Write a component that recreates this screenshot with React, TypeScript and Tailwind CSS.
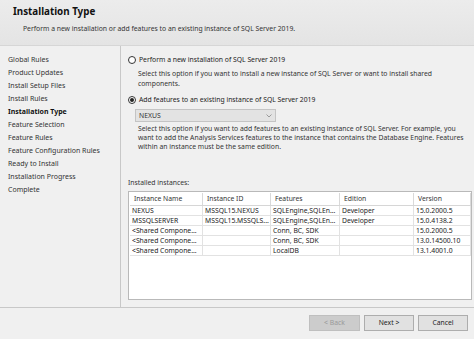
import React from 'react';

const steps = [
  'Global Rules',
  'Product Updates',
  'Install Setup Files',
  'Install Rules',
  'Installation Type',
  'Feature Selection',
  'Feature Rules',
  'Feature Configuration Rules',
  'Ready to Install',
  'Installation Progress',
  'Complete',
];

const rows = [
  ['NEXUS', 'MSSQL15.NEXUS', 'SQLEngine,SQLEn...', 'Developer', '15.0.2000.5'],
  ['MSSQLSERVER', 'MSSQL15.MSSQLS...', 'SQLEngine,SQLEn...', 'Developer', '15.0.4138.2'],
  ['<Shared Compone...', '', 'Conn, BC, SDK', '', '15.0.2000.5'],
  ['<Shared Compone...', '', 'Conn, BC, SDK', '', '13.0.14500.10'],
  ['<Shared Compone...', '', 'LocalDB', '', '13.1.4001.0'],
];

const cols = ['w-[73px]', 'w-[68px]', 'w-[69px]', 'w-[74px]', 'w-[57px]'];
const heads = ['Instance Name', 'Instance ID', 'Features', 'Edition', 'Version'];

function Radio({ checked }: { checked?: boolean }) {
  return (
    <span className="w-[8px] h-[8px] rounded-full border border-[#333] bg-white flex items-center justify-center shrink-0">
      {checked && <span className="w-[4px] h-[4px] rounded-full bg-[#222]" />}
    </span>
  );
}

export default function App() {
  return (
    <div
      className="w-[474px] h-[339px] bg-[#f0f0f0] flex flex-col text-[#222] text-[6.8px] leading-[10px] overflow-hidden"
      style={{ fontFamily: '"Noto Sans", "Open Sans", sans-serif' }}
    >
      {/* Header */}
      <div className="h-[46px] shrink-0 bg-gradient-to-b from-[#ececec] to-[#e4e4e4] border-b border-[#d6d6d6] pl-[13px] pt-[5px]">
        <h1 className="text-[9.8px] leading-[14px] font-bold text-[#111]">Installation Type</h1>
        <p className="mt-[5px] ml-[10px] text-[#333]">
          Perform a new installation or add features to an existing instance of SQL Server 2019.
        </p>
      </div>

      {/* Body */}
      <div className="flex flex-1 min-h-0">
        <nav className="w-[121px] shrink-0 border-r border-[#c8c8c8] pl-[8px] pt-[7px] flex flex-col text-[7px]">
          {steps.map((s) => (
            <div key={s} className={`h-[13px] leading-[13px] ${s === 'Installation Type' ? 'font-bold text-[#111]' : 'text-[#333]'}`}>
              {s}
            </div>
          ))}
        </nav>

        <main className="flex-1 pl-[7px] pr-[3px] pt-[9px] flex flex-col">
          <label className="flex items-center gap-[3px] h-[10px]">
            <Radio />
            <span>Perform a new installation of SQL Server 2019</span>
          </label>
          <p className="ml-[10px] mt-[4px] pr-[30px] text-[#333]">
            Select this option if you want to install a new instance of SQL Server or want to install shared components.
          </p>
          <label className="flex items-center gap-[3px] h-[10px] mt-[6px]">
            <Radio checked />
            <span>Add features to an existing instance of SQL Server 2019</span>
          </label>
          <div className="ml-[7px] mt-[4px] w-[141px] h-[13px] bg-[#e3e3e3] border border-[#c4c4c4] flex items-center justify-between px-[3px]">
            <span className="text-[#333]">NEXUS</span>
            <svg width="6" height="4" viewBox="0 0 6 4" fill="none">
              <path d="M0.5 0.5 L3 3 L5.5 0.5" stroke="#888" strokeWidth="0.8" />
            </svg>
          </div>
          <p className="ml-[10px] mt-[2px] pr-[2px] text-[#333] leading-[9px]">
            Select this option if you want to add features to an existing instance of SQL Server. For example, you want to add the Analysis Services features to the instance that contains the Database Engine. Features within an instance must be the same edition.
          </p>

          <div className="mt-[27px] text-[#333]">Installed instances:</div>
          <div className="mt-[3px] h-[109px] bg-white border border-[#b9b9b9] pl-[1px] pt-[1px]">
            <div className="flex h-[13px] border-b border-[#d6d6d6]">
              {heads.map((h, i) => (
                <div key={h} className={`${cols[i]} border-r border-[#d9d9d9] pl-[4px] leading-[12px] text-[#333]`}>{h}</div>
              ))}
            </div>
            {rows.map((r, ri) => (
              <div key={ri} className="flex h-[10px] border-b border-[#e2e2e2]">
                {r.map((c, i) => (
                  <div key={i} className={`${cols[i]} border-r border-[#e2e2e2] pl-[2px] leading-[9px] whitespace-nowrap overflow-hidden text-[#222]`}>{c}</div>
                ))}
              </div>
            ))}
          </div>
        </main>
      </div>

      {/* Footer */}
      <div className="h-[32px] shrink-0 border-t border-[#c8c8c8] flex items-start justify-end gap-[4px] pt-[7px] pr-[6px]">
        <button className="w-[51px] h-[16px] bg-[#cccccc] border border-[#bfbfbf] text-[#9a9a9a]">&lt; Back</button>
        <button className="w-[50px] h-[16px] bg-[#e1e1e1] border border-[#adadad] text-[#222]">Next &gt;</button>
        <button className="w-[50px] h-[16px] bg-[#e1e1e1] border border-[#adadad] text-[#222]">Cancel</button>
      </div>
    </div>
  );
}
